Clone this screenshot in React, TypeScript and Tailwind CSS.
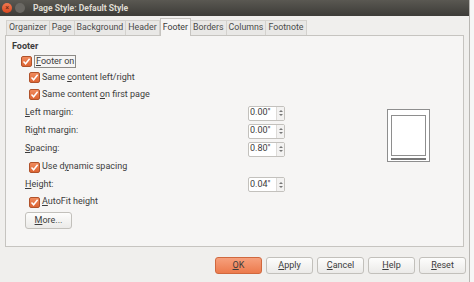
import React from "react";

const font = { fontFamily: 'Roboto, "Noto Sans", sans-serif' };

function Check({ className = "" }: { className?: string }) {
  return (
    <span
      className={`inline-flex h-[11px] w-[11px] shrink-0 items-center justify-center rounded-[2px] border border-[#b0522a] bg-gradient-to-b from-[#f08a5c] to-[#dd6432] ${className}`}
    >
      <svg width="9" height="9" viewBox="0 0 9 9">
        <path d="M1.5 4.6 L3.6 6.8 L7.6 1.8" fill="none" stroke="#fff" strokeWidth="1.5" />
      </svg>
    </span>
  );
}

function U({ children }: { children: React.ReactNode }) {
  return <span className="underline underline-offset-1">{children}</span>;
}

function Spin({ value }: { value: string }) {
  return (
    <div className="flex h-[15px] w-[37px] rounded-[2px] border border-[#c3c1bd] bg-white">
      <div className="flex flex-1 items-center pl-[1px] text-[9px] text-[#3c3c3c]">{value}</div>
      <div className="flex w-[8px] flex-col items-center justify-center gap-[2px] border-l border-[#dddbd8] bg-[#f3f2f1]">
        <span className="h-0 w-0 border-x-[2px] border-b-[2px] border-x-transparent border-b-[#777]" />
        <span className="h-0 w-0 border-x-[2px] border-t-[2px] border-x-transparent border-t-[#777]" />
      </div>
    </div>
  );
}

function Btn({ children, primary = false }: { children: React.ReactNode; primary?: boolean }) {
  return (
    <div
      className={`flex h-[17px] w-[47px] items-center justify-center rounded-[3px] border text-[9px] text-[#3c3c3c] ${
        primary
          ? "border-[#d0683e] bg-gradient-to-b from-[#f6a07c] to-[#ec7a4c]"
          : "border-[#c2c0bb] bg-gradient-to-b from-[#fdfdfc] to-[#ebeae8]"
      }`}
    >
      {children}
    </div>
  );
}

const tabs = ["Organizer", "Page", "Background", "Header", "Footer", "Borders", "Columns", "Footnote"];

export default function App() {
  return (
    <div className="h-[282px] w-[474px] overflow-hidden bg-[#f6f6f6] text-[#3c3c3c]" style={font}>
      <div className="flex h-full w-[470px] flex-col border-r border-[#b9b7b3] bg-[#f0efed]">
        {/* TITLE BAR */}
        <div className="flex h-[16px] items-center gap-[3px] bg-gradient-to-b from-[#5a5852] to-[#3d3c38] px-[2px]">
          <span className="flex h-[10px] w-[10px] items-center justify-center rounded-full bg-gradient-to-b from-[#f2784f] to-[#d9461d] text-[7px] leading-none text-[#5a2410]">
            ×
          </span>
          <span className="h-[10px] w-[10px] rounded-full bg-[#6a6863]" />
          <span className="ml-[5px] text-[8.6px] font-bold text-[#dfdbd2]">Page Style: Default Style</span>
        </div>

        {/* TABS */}
        <div className="flex h-[19px] items-end pl-[6px] pt-[3px]">
          {tabs.map((t) =>
            t === "Footer" ? (
              <div
                key={t}
                className="relative z-10 -mb-px flex h-[18px] items-center border border-b-0 border-[#c6c4c0] bg-[#f6f5f4] px-[2px] text-[8.8px]"
              >
                {t}
              </div>
            ) : (
              <div
                key={t}
                className="flex h-[15px] items-center border border-b-0 border-l-0 border-[#d4d2ce] bg-[#e9e8e6] px-[2px] text-[8.8px] text-[#4a4a4a] first:border-l"
              >
                {t}
              </div>
            )
          )}
        </div>

        {/* PANEL */}
        <div className="mx-[5px] flex h-[212px] border border-[#c6c4c0] bg-[#f6f5f4] pl-[6px] pt-[4px]">
          <div className="flex w-[290px] flex-col text-[9px]">
            <div className="flex h-[13px] items-center font-bold">Footer</div>
            <div className="flex h-[16px] items-center pl-[9px]">
              <Check />
              <span className="ml-[2px] border border-[#8c8a86] px-[1px] leading-[11px]">
                <U>F</U>ooter on
              </span>
            </div>
            <div className="flex h-[17px] items-center pl-[17px]">
              <Check />
              <span className="ml-[2px]">
                Same <U>c</U>ontent left/right
              </span>
            </div>
            <div className="flex h-[17px] items-center pl-[17px]">
              <Check />
              <span className="ml-[2px]">
                Same content <U>o</U>n first page
              </span>
            </div>
            <div className="mt-[1px] flex h-[18px] items-center pl-[13px]">
              <span className="w-[223px]">
                <U>L</U>eft margin:
              </span>
              <Spin value={'0.00"'} />
            </div>
            <div className="flex h-[18px] items-center pl-[13px]">
              <span className="w-[223px]">
                Ri<U>g</U>ht margin:
              </span>
              <Spin value={'0.00"'} />
            </div>
            <div className="flex h-[18px] items-center pl-[13px]">
              <span className="w-[223px]">
                <U>S</U>pacing:
              </span>
              <Spin value={'0.80"'} />
            </div>
            <div className="flex h-[18px] items-center pl-[17px]">
              <Check />
              <span className="ml-[2px]">Use d<U>y</U>namic spacing</span>
            </div>
            <div className="flex h-[17px] items-center pl-[13px]">
              <span className="w-[223px]">
                <U>H</U>eight:
              </span>
              <Spin value={'0.04"'} />
            </div>
            <div className="flex h-[18px] items-center pl-[17px]">
              <Check />
              <span className="ml-[2px]">
                <U>A</U>utoFit height
              </span>
            </div>
            <div className="ml-[13px] mt-[1px] flex h-[17px] w-[47px] items-center justify-center rounded-[3px] border border-[#c2c0bb] bg-gradient-to-b from-[#fdfdfc] to-[#ebeae8]">
              <span>
                <U>M</U>ore...
              </span>
            </div>
          </div>

          {/* PAGE PREVIEW */}
          <div className="ml-[85px] mt-[69px] flex h-[53px] w-[43px] flex-col border border-[#8e8e8e] bg-white px-[3px] pt-[5px]">
            <div className="h-[41px] border border-[#8e8e8e] bg-white" />
            <div className="mt-[2px] h-[2px] bg-[#777]" />
          </div>
        </div>

        {/* BUTTONS */}
        <div className="mt-[10px] flex justify-end gap-[4px] pr-[3px]">
          <Btn primary>
            <U>O</U>K
          </Btn>
          <Btn>
            <U>A</U>pply
          </Btn>
          <Btn>
            <U>C</U>ancel
          </Btn>
          <Btn>
            <U>H</U>elp
          </Btn>
          <Btn>
            <U>R</U>eset
          </Btn>
        </div>
      </div>
    </div>
  );
}
